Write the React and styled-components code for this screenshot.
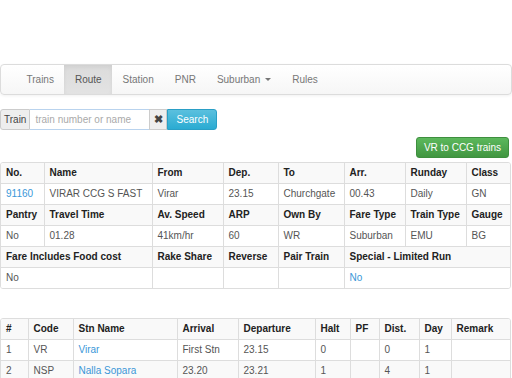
import React from "react";
import styled, { createGlobalStyle } from "styled-components";

const Global = createGlobalStyle`
  html, body { margin: 0; padding: 0; background: #fff; }
  body { font-family: "Liberation Sans", Arial, sans-serif; font-size: 10px; color: #555; }
  * { box-sizing: border-box; }
`;

const Page = styled.div`
  width: 512px;
  padding-top: 64px;
`;

const Navbar = styled.nav`
  width: 512px;
  height: 31px;
  border: 1px solid #dcdcdc;
  border-radius: 4px;
  background: linear-gradient(to bottom, #ffffff 0%, #f6f6f6 100%);
  box-shadow: 0 1px 3px rgba(0,0,0,0.06);
  padding-left: 15px;
  display: flex;
`;

const NavItem = styled.a`
  display: flex;
  align-items: center;
  gap: 5px;
  height: 29px;
  padding: 0 10.5px;
  font-size: 10px;
  text-decoration: none;
  background: ${p => (p.$active ? "linear-gradient(to bottom, #dbdbdb 0%, #e3e3e3 100%)" : "transparent")};
  box-shadow: ${p => (p.$active ? "inset 0 2px 4px rgba(0,0,0,0.06)" : "none")};
  color: ${p => (p.$active ? "#555" : "#777")};
`;

const Caret = styled.span`
  display: inline-block;
  width: 0;
  height: 0;
  border-left: 3px solid transparent;
  border-right: 3px solid transparent;
  border-top: 3px solid #777;
`;

const SearchRow = styled.div`
  display: flex;
  margin-top: 14px;
  height: 21px;
`;

const Addon = styled.span`
  display: flex;
  align-items: center;
  justify-content: center;
  height: 21px;
  padding: 0 ${p => p.$pad}px;
  width: ${p => (p.$w ? p.$w + "px" : "auto")};
  background: #eee;
  border: 1px solid #ccc;
  border-radius: ${p => p.$radius || "0"};
  color: #444;
  font-size: ${p => p.$fs || 10}px;
  font-weight: ${p => (p.$bold ? 700 : 400)};
`;

const Input = styled.input`
  width: 119px;
  height: 21px;
  border: 1px solid #b9d3ee;
  border-left: none;
  border-right: none;
  padding: 0 5px;
  font-family: "Liberation Sans", Arial, sans-serif;
  font-size: 10px;
  color: #555;
  outline: none;
  &::placeholder { color: #aaa; }
`;

const SearchButton = styled.button`
  width: 50px;
  height: 21px;
  border: 1px solid #2a9fc6;
  border-radius: 0 3px 3px 0;
  background: linear-gradient(to bottom, #5bc0de 0%, #2aabd2 100%);
  color: #fff;
  font-family: "Liberation Sans", Arial, sans-serif;
  font-size: 10px;
  padding: 0;
`;

const ActionRow = styled.div`
  display: flex;
  justify-content: flex-end;
  margin-top: 7px;
  padding-right: 3px;
`;

const GreenButton = styled.button`
  width: 93px;
  height: 21px;
  border: 1px solid #3e8f3e;
  border-radius: 3px;
  background: linear-gradient(to bottom, #5cb85c 0%, #419641 100%);
  color: #fff;
  font-family: "Liberation Sans", Arial, sans-serif;
  font-size: 10px;
  padding: 0;
`;

const Panel = styled.div`
  width: 511px;
  margin-top: ${p => p.$mt}px;
  border: 1px solid #ddd;
  border-radius: 3px;
  overflow: hidden;
`;

const Table = styled.table`
  width: 100%;
  border-collapse: collapse;
  table-layout: fixed;
  & tr:nth-child(odd) { background: #f9f9f9; }
  & tr:nth-child(even) { background: #fff; }
  & tr:first-child td, & tr:first-child th { border-top: none; }
  & tr td:first-child, & tr th:first-child { border-left: none; }
  & tr td:last-child, & tr th:last-child { border-right: none; }
  & tr:last-child td { border-bottom: none; }
`;

const Th = styled.th`
  text-align: left;
  font-weight: 700;
  color: #222;
  padding: 3px 5px;
  line-height: 14px;
  border: 1px solid #ddd;
  white-space: nowrap;
  overflow: hidden;
`;

const Td = styled.td`
  text-align: left;
  color: #555;
  padding: 3px 5px;
  line-height: 14px;
  border: 1px solid #ddd;
  white-space: nowrap;
  overflow: hidden;
`;

const Link = styled.a`
  color: #3a97d8;
  text-decoration: none;
`;

const infoCols = [43, 108, 71, 55, 66, 61, 61, 46];
const routeCols = [27, 45, 104, 61, 77, 35, 29, 40, 32, 61];

const routeRows = [
  ["1", "VR", "Virar", "First Stn", "23.15", "0", "", "0", "1", ""],
  ["2", "NSP", "Nalla Sopara", "23.20", "23.21", "1", "", "4", "1", ""],
];

export default function App() {
  return (
    <Page>
      <Global />
      <Navbar>
        <NavItem>Trains</NavItem>
        <NavItem $active>Route</NavItem>
        <NavItem>Station</NavItem>
        <NavItem>PNR</NavItem>
        <NavItem>Suburban <Caret /></NavItem>
        <NavItem>Rules</NavItem>
      </Navbar>

      <SearchRow>
        <Addon $radius="3px 0 0 3px" $pad={3}>Train</Addon>
        <Input placeholder="train number or name" />
        <Addon $w={18} $pad={0} $fs={11} $bold>✖</Addon>
        <SearchButton>Search</SearchButton>
      </SearchRow>

      <ActionRow>
        <GreenButton>VR to CCG trains</GreenButton>
      </ActionRow>

      <Panel $mt={4}>
        <Table>
          <colgroup>
            {infoCols.map((w, i) => <col key={i} style={{ width: w }} />)}
          </colgroup>
          <tbody>
            <tr>
              <Th>No.</Th><Th>Name</Th><Th>From</Th><Th>Dep.</Th>
              <Th>To</Th><Th>Arr.</Th><Th>Runday</Th><Th>Class</Th>
            </tr>
            <tr>
              <Td><Link>91160</Link></Td><Td>VIRAR CCG S FAST</Td><Td>Virar</Td><Td>23.15</Td>
              <Td>Churchgate</Td><Td>00.43</Td><Td>Daily</Td><Td>GN</Td>
            </tr>
            <tr>
              <Th>Pantry</Th><Th>Travel Time</Th><Th>Av. Speed</Th><Th>ARP</Th>
              <Th>Own By</Th><Th>Fare Type</Th><Th>Train Type</Th><Th>Gauge</Th>
            </tr>
            <tr>
              <Td>No</Td><Td>01.28</Td><Td>41km/hr</Td><Td>60</Td>
              <Td>WR</Td><Td>Suburban</Td><Td>EMU</Td><Td>BG</Td>
            </tr>
            <tr>
              <Th colSpan={2}>Fare Includes Food cost</Th><Th>Rake Share</Th><Th>Reverse</Th>
              <Th>Pair Train</Th><Th colSpan={3}>Special - Limited Run</Th>
            </tr>
            <tr>
              <Td colSpan={2}>No</Td><Td></Td><Td></Td>
              <Td></Td><Td colSpan={3}><Link>No</Link></Td>
            </tr>
          </tbody>
        </Table>
      </Panel>

      <Panel $mt={29}>
        <Table>
          <colgroup>
            {routeCols.map((w, i) => <col key={i} style={{ width: w }} />)}
          </colgroup>
          <tbody>
            <tr>
              <Th>#</Th><Th>Code</Th><Th>Stn Name</Th><Th>Arrival</Th><Th>Departure</Th>
              <Th>Halt</Th><Th>PF</Th><Th>Dist.</Th><Th>Day</Th><Th>Remark</Th>
            </tr>
            {routeRows.map((r, i) => (
              <tr key={i}>
                {r.map((c, j) => (
                  <Td key={j}>{j === 2 ? <Link>{c}</Link> : c}</Td>
                ))}
              </tr>
            ))}
          </tbody>
        </Table>
      </Panel>
    </Page>
  );
}
